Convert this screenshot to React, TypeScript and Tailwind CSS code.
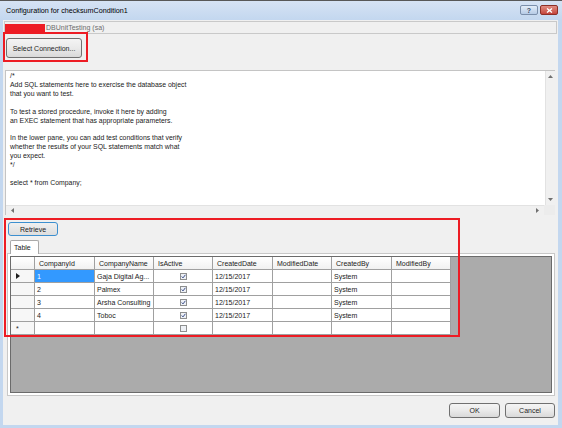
import React from 'react'

const columns = ['CompanyId', 'CompanyName', 'IsActive', 'CreatedDate', 'ModifiedDate', 'CreatedBy', 'ModifiedBy']

const rows = [
  { id: '1', name: 'Gaja Digital Ag...', created: '12/15/2017', by: 'System' },
  { id: '2', name: 'Palmex', created: '12/15/2017', by: 'System' },
  { id: '3', name: 'Arsha Consulting', created: '12/15/2017', by: 'System' },
  { id: '4', name: 'Toboc', created: '12/15/2017', by: 'System' },
]

const sqlText = `/*
Add SQL statements here to exercise the database object
that you want to test.

To test a stored procedure, invoke it here by adding
an EXEC statement that has appropriate parameters.

In the lower pane, you can add test conditions that verify
whether the results of your SQL statements match what
you expect.
*/

select * from Company;`

const btn =
  'flex items-center justify-center rounded-[3px] border border-[#707070] bg-linear-to-b from-[#f4f4f4] via-[#eaeaea] to-[#d9d9d9] text-[#1e1e1e]'

function Check({ on }: { on: boolean }) {
  return (
    <svg width="7" height="7" viewBox="0 0 7 7">
      <rect x="0.5" y="0.5" width="6" height="6" fill="#eef1f6" stroke="#8e8f8f" />
      {on && <path d="M1.7 3.5 L3 4.9 L5.4 1.8" fill="none" stroke="#3b4f8a" strokeWidth="1" />}
    </svg>
  )
}

function Arrow({ dir }: { dir: 'up' | 'down' | 'left' | 'right' }) {
  const d = {
    up: 'M0 4 L2.5 1 L5 4 Z',
    down: 'M0 1 L2.5 4 L5 1 Z',
    left: 'M4 0 L1 2.5 L4 5 Z',
    right: 'M1 0 L4 2.5 L1 5 Z',
  }[dir]
  return (
    <svg width="5" height="5" viewBox="0 0 5 5">
      <path d={d} fill="#707070" />
    </svg>
  )
}

export default function App() {
  const cell = 'flex items-center h-[13px] border-r border-b border-[#a0a0a0] overflow-hidden whitespace-nowrap'

  return (
    <div className="w-[562px] h-[428px] flex flex-col bg-[#c3d7ef] border-t border-[#585858] font-['Liberation_Sans',Arial,sans-serif] text-[7px] leading-[9px] text-[#1a1a1a]">
      {/* title bar */}
      <div className="h-[19px] flex items-start justify-between bg-linear-to-b from-[#d6e3f4] to-[#c3d7ef]">
        <span className="pl-[6px] pt-[5px] text-[7.2px] text-black">Configuration for checksumCondition1</span>
        <div className="flex gap-[2px] pt-[4px] pr-[4px]">
          <div className="w-[18px] h-[10px] rounded-[2px] border border-[#7b8fab] bg-linear-to-b from-[#e3edf8] to-[#b6cbe6] flex items-center justify-center">
            <span className="text-[7px] leading-[7px] font-bold text-[#3c4d66]">?</span>
          </div>
          <div className="w-[18px] h-[10px] rounded-[2px] border border-[#8c2f27] bg-linear-to-b from-[#e08d84] to-[#c4433a] flex items-center justify-center">
            <svg width="7" height="5" viewBox="0 0 7 5">
              <path d="M1 0.5 L6 4.5 M6 0.5 L1 4.5" stroke="#ffffff" strokeWidth="1.4" />
            </svg>
          </div>
        </div>
      </div>

      {/* body */}
      <div className="flex-1 flex flex-col ml-[3px] mr-[4px] mb-[3px] bg-[#f0f0f0]">
        <div className="mt-[1px] mx-[1px] h-[13px] flex items-center border border-[#c9c9c9] bg-[#f0f0f0]">
          <div className="w-[40px] h-[8px] bg-[#ed1c24]" />
          <span className="pl-[1px] text-[#6d6d6d]">DBUnitTesting (sa)</span>
        </div>

        <div className="relative mt-[4px] ml-[3px] w-[76px]">
          <div className={`${btn} h-[20px] w-[76px]`}>Select Connection...</div>
          <div className="pointer-events-none absolute -left-[3px] -top-[6px] w-[85px] h-[30px] border-2 border-[#ed1c24]" />
        </div>

        {/* sql editor */}
        <div className="mt-[12px] ml-[2px] mr-[3px] h-[145px] flex flex-col border-t border-l border-[#c4c4c4]">
          <div className="flex-1 flex">
            <pre className="flex-1 bg-white pl-[4px] pt-[1px] font-['Liberation_Sans',Arial,sans-serif] text-[6.9px] leading-[8.9px] text-[#1a1a1a]">
              {sqlText}
            </pre>
            <div className="w-[10px] bg-[#f0f0f0] border-l border-[#e2e2e2] flex flex-col items-center justify-between py-[3px]">
              <Arrow dir="up" />
              <Arrow dir="down" />
            </div>
          </div>
          <div className="h-[10px] flex">
            <div className="flex-1 bg-[#f0f0f0] border-t border-[#e2e2e2] flex items-center justify-between px-[4px]">
              <Arrow dir="left" />
              <Arrow dir="right" />
            </div>
            <div className="w-[11px] bg-[#ececec]" />
          </div>
        </div>

        {/* results */}
        <div className="relative flex flex-col">
          <div className="mt-[7px] ml-[5px] w-[50px] h-[14px] flex items-center justify-center rounded-[3px] border border-[#3c8fcf] bg-linear-to-b from-[#f0f0f0] to-[#dedede]">
            Retrieve
          </div>
          <div className="mt-[4px] ml-[7px] w-[29px] h-[14px] -mb-px relative z-10 flex items-center pl-[3px] bg-white border border-b-0 border-[#a9a9a9] rounded-t-[2px]">
            Table
          </div>
          <div className="ml-[4px] mr-[3px] h-[143px] border border-[#c8c8c8] bg-white p-[2px]">
            <div className="h-full bg-[#ababab] border border-[#6b6b6b]">
              <div className="grid grid-cols-[24px_60px_59px_59px_60px_59px_60px_59px] w-[440px] bg-white">
                <div className={`${cell} bg-linear-to-b from-[#ffffff] to-[#f1f1f1]`} />
                {columns.map((c) => (
                  <div key={c} className={`${cell} pl-[4px] bg-linear-to-b from-[#ffffff] to-[#f1f1f1]`}>
                    {c}
                  </div>
                ))}
                {rows.map((r, i) => (
                  <React.Fragment key={r.id}>
                    <div className={`${cell} pl-[5px] bg-[#f7f7f7]`}>
                      {i === 0 && (
                        <svg width="4" height="6" viewBox="0 0 4 6">
                          <path d="M0 0 L4 3 L0 6 Z" fill="#1e1e1e" />
                        </svg>
                      )}
                    </div>
                    <div className={`${cell} pl-[2px] ${i === 0 ? 'bg-[#3399ff] text-white' : ''}`}>{r.id}</div>
                    <div className={`${cell} pl-[2px]`}>{r.name}</div>
                    <div className={`${cell} justify-center`}>
                      <Check on />
                    </div>
                    <div className={`${cell} pl-[2px]`}>{r.created}</div>
                    <div className={cell} />
                    <div className={`${cell} pl-[2px]`}>{r.by}</div>
                    <div className={cell} />
                  </React.Fragment>
                ))}
                <div className={`${cell} pl-[5px] bg-[#f7f7f7]`}>*</div>
                <div className={cell} />
                <div className={cell} />
                <div className={`${cell} justify-center`}>
                  <Check on={false} />
                </div>
                <div className={cell} />
                <div className={cell} />
                <div className={cell} />
                <div className={cell} />
              </div>
            </div>
          </div>
          <div className="pointer-events-none absolute left-[1px] top-[3px] w-[456px] h-[119px] border-2 border-[#ed1c24]" />
        </div>

        <div className="mt-[7px] mr-[3px] flex justify-end gap-[5px]">
          <div className={`${btn} w-[51px] h-[15px]`}>OK</div>
          <div className={`${btn} w-[50px] h-[15px]`}>Cancel</div>
        </div>
      </div>
    </div>
  )
}
